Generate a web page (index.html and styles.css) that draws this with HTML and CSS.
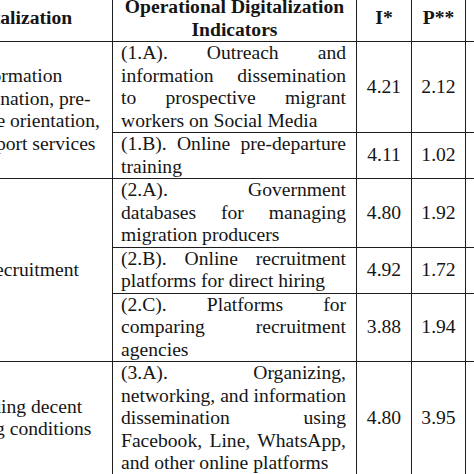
FILE: index.html
```html
<!DOCTYPE html>
<html>
<head>
<meta charset="utf-8">
<link rel="stylesheet" href="styles.css">
</head>
<body>
<div class="frame">
<table class="grid">
  <colgroup>
    <col class="c-area">
    <col class="c-ind">
    <col class="c-num">
    <col class="c-num2">
    <col class="c-extra">
  </colgroup>
  <thead>
    <tr>
      <th>Digitalization</th>
      <th>Operational Digitalization<br>Indicators</th>
      <th>I*</th>
      <th>P**</th>
      <th></th>
    </tr>
  </thead>
  <tbody>
    <tr>
      <td class="area" rowspan="2">Information<br>dissemination, pre-<br>departure orientation,<br>and support services</td>
      <td class="ind"><span class="fill">(1.A). Outreach and</span><span class="fill">information dissemination</span><span class="fill">to prospective migrant</span><span>workers on Social Media</span></td>
      <td class="num">4.21</td>
      <td class="num">2.12</td>
      <td></td>
    </tr>
    <tr>
      <td class="ind"><span class="fill">(1.B). Online pre-departure</span><span>training</span></td>
      <td class="num">4.11</td>
      <td class="num">1.02</td>
      <td></td>
    </tr>
    <tr>
      <td class="area" rowspan="3">Fair recruitment</td>
      <td class="ind"><span class="fill">(2.A). Government</span><span class="fill">databases for managing</span><span>migration producers</span></td>
      <td class="num">4.80</td>
      <td class="num">1.92</td>
      <td></td>
    </tr>
    <tr>
      <td class="ind"><span class="fill">(2.B). Online recruitment</span><span>platforms for direct hiring</span></td>
      <td class="num">4.92</td>
      <td class="num">1.72</td>
      <td></td>
    </tr>
    <tr>
      <td class="ind"><span class="fill">(2.C). Platforms for</span><span class="fill">comparing recruitment</span><span>agencies</span></td>
      <td class="num">3.88</td>
      <td class="num">1.94</td>
      <td></td>
    </tr>
    <tr>
      <td class="area">Providing decent<br>working conditions</td>
      <td class="ind"><span class="fill">(3.A). Organizing,</span><span class="fill">networking, and information</span><span class="fill">dissemination using</span><span class="fill">Facebook, Line, WhatsApp,</span><span>and other online platforms</span></td>
      <td class="num">4.80</td>
      <td class="num">3.95</td>
      <td></td>
    </tr>
  </tbody>
</table>
</div>
</body>
</html>
```

FILE: styles.css
```css
html, body {
  margin: 0;
  padding: 0;
  background: #ffffff;
  overflow: hidden;
}

.frame {
  width: 474px;
  height: 474px;
  overflow: hidden;
}

.grid {
  border-collapse: collapse;
  table-layout: fixed;
  width: 607px;
  margin-left: -82px;
  margin-top: -5px;
  font-family: "Liberation Serif", "Times New Roman", serif;
  font-size: 19.6px;
  line-height: 22.5px;
  color: #151515;
}

.c-area { width: 194px; }
.c-ind { width: 244px; }
.c-num { width: 55px; }
.c-num2 { width: 54px; }
.c-extra { width: 60px; }

.grid th,
.grid td {
  border: 1px solid #1e1e1e;
  padding: 0 8px;
  vertical-align: middle;
  text-align: center;
}

.grid th {
  font-weight: bold;
}

.grid td.ind {
  text-align: left;
  padding: 0 10px 0 8px;
}

.ind span {
  display: block;
}

.ind .fill {
  text-align: justify;
  text-align-last: justify;
}

.num {
  padding: 0;
}
```
